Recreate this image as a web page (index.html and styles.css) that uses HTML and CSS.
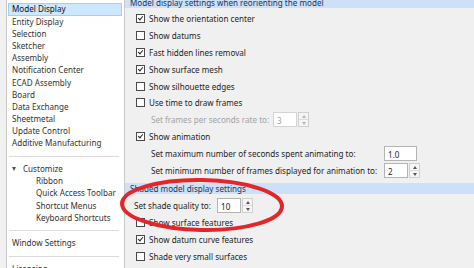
FILE: index.html
```html
<!DOCTYPE html>
<html lang="en">
<head>
    <meta charset="UTF-8">
    <title>Options - Model Display</title>
    <link rel="stylesheet" href="styles.css">
</head>
<body>
    <div class="window">
        <!-- Lista de categorias -->
        <div class="nav">
            <ul class="nav-list">
                <li class="selected">Model Display</li>
                <li>Entity Display</li>
                <li>Selection</li>
                <li>Sketcher</li>
                <li>Assembly</li>
                <li>Notification Center</li>
                <li>ECAD Assembly</li>
                <li>Board</li>
                <li>Data Exchange</li>
                <li>Sheetmetal</li>
                <li>Update Control</li>
                <li>Additive Manufacturing</li>
                <li class="sep"></li>
                <li class="group"><span class="arrow"></span>Customize</li>
                <li class="sub">Ribbon</li>
                <li class="sub">Quick Access Toolbar</li>
                <li class="sub">Shortcut Menus</li>
                <li class="sub">Keyboard Shortcuts</li>
                <li class="sep"></li>
                <li>Window Settings</li>
                <li class="sep"></li>
                <li>Licensing</li>
            </ul>
        </div>

        <!-- Panel de opciones -->
        <div class="settings">
            <div class="section-title first">Model display settings when reorienting the model</div>
            <div class="row"><span class="check on"></span>Show the orientation center</div>
            <div class="row"><span class="check"></span>Show datums</div>
            <div class="row"><span class="check on"></span>Fast hidden lines removal</div>
            <div class="row"><span class="check on"></span>Show surface mesh</div>
            <div class="row"><span class="check"></span>Show silhouette edges</div>
            <div class="row"><span class="check"></span>Use time to draw frames</div>
            <div class="row indent disabled">
                <span class="label w-rate">Set frames per seconds rate to:</span>
                <span class="field w-small">3</span><span class="spin"><i class="up"></i><i class="down"></i></span>
            </div>
            <div class="row"><span class="check on"></span>Show animation</div>
            <div class="row indent">
                <span class="label w-long">Set maximum number of seconds spent animating to:</span>
                <span class="field w-wide">1.0</span>
            </div>
            <div class="row indent">
                <span class="label w-long">Set minimum number of frames displayed for animation to:</span>
                <span class="field w-small">2</span><span class="spin"><i class="up"></i><i class="down"></i></span>
            </div>

            <div class="section-title">Shaded model display settings</div>
            <div class="row plain">
                <span class="label w-shade">Set shade quality to:</span>
                <span class="field w-small">10</span><span class="spin"><i class="up"></i><i class="down"></i></span>
            </div>
            <div class="row"><span class="check"></span>Show surface features</div>
            <div class="row"><span class="check on"></span>Show datum curve features</div>
            <div class="row"><span class="check"></span>Shade very small surfaces</div>
        </div>

        <!-- Marca roja -->
        <svg class="mark" width="474" height="268" viewBox="0 0 474 268">
            <ellipse cx="202" cy="205" rx="80" ry="25" fill="none" stroke="#e3262a" stroke-width="4" transform="rotate(1 202 205)"/>
        </svg>
    </div>
</body>
</html>
```

FILE: styles.css
```css
body {
    margin: 0;
    overflow: hidden;
    font-family: "Noto Sans", "Open Sans", sans-serif;
    font-size: 8.1px;
    color: #1e1e1e;
    background-color: #f0f0f0;
}

.window {
    display: flex;
    height: 268px;
    overflow: hidden;
    position: relative;
}

.nav {
    width: 125px;
    padding-left: 6px;
    box-sizing: border-box;
    flex-shrink: 0;
}

.nav-list {
    list-style: none;
    margin: 0;
    padding: 3px 2px 0 1px;
    height: 100%;
    background-color: white;
    border-left: 1px solid #c9c9c9;
    border-right: 1px solid #c9c9c9;
}

.nav-list li {
    height: 12.2px;
    line-height: 12.2px;
    padding-left: 4px;
    white-space: nowrap;
    color: #333;
}

.nav-list li.selected {
    background-color: #cce8ff;
    border: 1px solid #99d1ff;
    height: 10.6px;
    line-height: 10.6px;
    padding-left: 3px;
    color: #111;
}

.nav-list li.sep {
    height: 13.4px;
    position: relative;
}

.nav-list li.sep::after {
    content: "";
    position: absolute;
    left: 1px;
    right: 3px;
    top: 6px;
    border-top: 1px solid #dcdcdc;
}

.nav-list li.group .arrow {
    display: inline-block;
    width: 0;
    height: 0;
    border-left: 2.5px solid transparent;
    border-right: 2.5px solid transparent;
    border-top: 4px solid #555;
    margin-right: 7px;
    vertical-align: 1px;
}

.nav-list li.sub {
    padding-left: 28px;
}

.settings {
    flex-grow: 1;
    background-color: #f0f0f1;
}

.section-title {
    height: 11px;
    line-height: 11px;
    padding-left: 5px;
    background-color: #cce0f7;
    color: #1f3354;
    margin-top: 4px;
    margin-bottom: 3px;
    white-space: nowrap;
}

.section-title.first {
    margin-top: -3px;
    margin-bottom: 2px;
}

.row {
    display: flex;
    align-items: center;
    height: 16.9px;
    padding-left: 11px;
    white-space: nowrap;
}

.row.indent {
    padding-left: 26px;
}

.row.plain {
    padding-left: 9px;
}

.row.disabled {
    color: #a3a3a3;
}

.check {
    width: 7px;
    height: 7px;
    border: 1px solid #4a4a4a;
    background-color: white;
    margin-right: 4px;
    position: relative;
    flex-shrink: 0;
}

.check.on::after {
    content: "";
    position: absolute;
    left: 2px;
    top: 0px;
    width: 2px;
    height: 4px;
    border-right: 1.2px solid #222;
    border-bottom: 1.2px solid #222;
    transform: rotate(40deg);
}

.label {
    display: inline-block;
}

.w-rate { width: 122px; }
.w-long { width: 233px; }
.w-shade { width: 83px; }

.field {
    height: 15px;
    line-height: 15px;
    box-sizing: border-box;
    border: 1px solid #b4b4b4;
    background-color: white;
    padding-left: 3px;
    color: #1e1e1e;
}

.disabled .field {
    border-color: #d4d4d4;
    color: #a3a3a3;
}

.w-small { width: 24px; }
.w-wide { width: 33px; }

.spin {
    width: 11px;
    height: 15px;
    margin-left: 1px;
    display: flex;
    flex-direction: column;
    border: 1px solid #cfcfcf;
    box-sizing: border-box;
    background-color: #f5f5f5;
}

.spin i {
    flex-grow: 1;
    position: relative;
}

.spin i::after {
    content: "";
    position: absolute;
    left: 2.5px;
    border-left: 2.5px solid transparent;
    border-right: 2.5px solid transparent;
}

.spin .up {
    border-bottom: 1px solid #dcdcdc;
}

.spin .up::after {
    top: 2px;
    border-bottom: 3px solid #555;
}

.spin .down::after {
    top: 2px;
    border-top: 3px solid #555;
}

.disabled .spin .up::after { border-bottom-color: #b5b5b5; }
.disabled .spin .down::after { border-top-color: #b5b5b5; }

.mark {
    position: absolute;
    left: 0;
    top: 0;
    pointer-events: none;
}
```
